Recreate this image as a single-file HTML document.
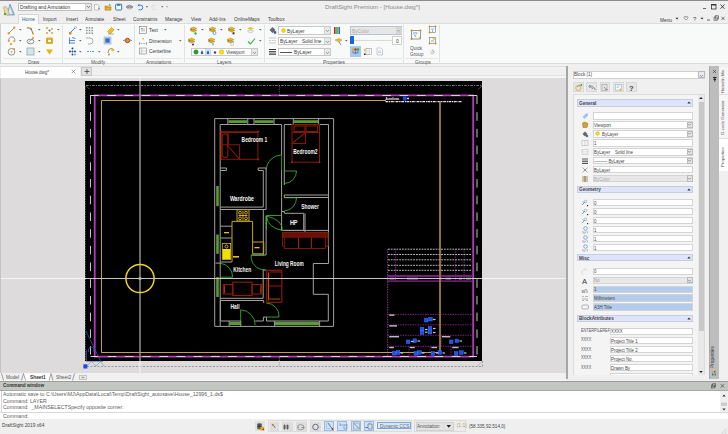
<!DOCTYPE html>
<html><head><meta charset="utf-8">
<style>
*{margin:0;padding:0;box-sizing:border-box}
html,body{width:728px;height:434px;overflow:hidden;background:#efefef;font-family:"Liberation Sans",sans-serif;color:#333;}
.a{position:absolute}
.t{position:absolute;white-space:nowrap;line-height:1;}
.s6{font-size:6px;transform:scaleX(.8);transform-origin:0 0;color:#383838}
</style></head><body>
<!-- ribbon panel -->
<div class="a" style="left:0;top:23px;width:728px;height:41px;background:#f8f9f9;border-top:1px solid #dcdcdc;border-bottom:1px solid #d8d8d8"></div>
<div class="a" style="left:0;top:24px;width:1px;height:40px;background:#d0d0d0"></div>
<!-- doc tab bar -->
<div class="a" style="left:0;top:64px;width:566px;height:14px;background:#f0f0f0"></div>
<div class="a" style="left:0;top:64px;width:566px;height:2.5px;background:#f2f2f2;border-bottom:1px solid #dedede"></div>
<div class="a" style="left:0;top:75.2px;width:566px;height:2.8px;background:#f6f6f6;border-top:1px solid #e2e2e2"></div>
<div class="a" style="left:1px;top:67px;width:79px;height:10.8px;background:#fff"></div>
<div class="t s6" style="left:24.7px;top:68.8px;color:#444;transform:scaleX(.74)">House.dwg*</div>
<svg class="a" style="left:71px;top:69px" width="5" height="5"><path d="M.7 .7L4.3 4.3M4.3 .7L.7 4.3" stroke="#666" stroke-width=".6"/></svg>
<div class="a" style="left:81.2px;top:66.6px;width:10.6px;height:9.1px;background:#e2e2e2;border:1px solid #c8c8c8"></div>
<svg class="a" style="left:82.5px;top:67.7px" width="8" height="7"><path d="M4 1V6M1.5 3.5H6.5" stroke="#444" stroke-width=".8"/></svg>
<!-- canvas -->
<div class="a" style="left:0;top:78px;width:566px;height:295px;background:#dddbdb"></div>
<div class="a" style="left:0;top:78px;width:1px;height:302px;background:#c4c4c4"></div>
<div class="a" style="left:85px;top:81px;width:397px;height:280px;background:#000"></div>
<!-- ===== title bar ===== -->
<div class="a" style="left:0;top:0;width:728px;height:1px;background:#8c8c8c"></div>
<svg class="a" style="left:2px;top:3px" width="14" height="14" viewBox="0 0 14 14">
<path d="M8 1L12.5 12H5Z" fill="#9cc0e0" stroke="#5a88b8" stroke-width=".6"/>
<path d="M8 4L10.5 11H6Z" fill="#dfeefa"/>
<path d="M1.5 4Q4 2.5 5.5 5L7.5 11.5Q5 13 3 11.5Z" fill="#e8d8a8" stroke="#a89060" stroke-width=".5"/>
<circle cx="3" cy="11" r="1.3" fill="#5ab040"/>
</svg>
<div class="a" style="left:18px;top:3px;width:74px;height:8px;background:#fff;border:1px solid #bdbdbd"></div>
<div class="a" style="left:85px;top:4px;width:6px;height:6px;background:#e4e4e4;border-left:1px solid #cfcfcf"></div>
<svg class="a" style="left:86px;top:5px" width="5" height="4"><path d="M1 1L2.5 2.6L4 1" stroke="#555" stroke-width=".7" fill="none"/></svg>
<div class="t s6" style="left:20px;top:4px;color:#333">Drafting and Annotation</div>
<!-- quick access -->
<svg class="a" style="left:90px;top:0" width="82" height="14" viewBox="0 0 82 14">
<path d="M4.5 4.5H7.5L9 6V10H4.5Z" fill="#fbfbfb" stroke="#9a9a9a" stroke-width=".6"/>
<path d="M8 8.5H10M9 7.5V9.5" stroke="#777" stroke-width=".5"/>
<path d="M15 6H17.5L18.3 6.8H21V10.2H15Z" fill="#e8b428" stroke="#9a6a10" stroke-width=".45"/>
<path d="M15.3 7.6H21" stroke="#b88818" stroke-width=".5"/>
<path d="M18.5 5.5L19.8 3.8L21 5.5Z" fill="#2eaa2e"/>
<rect x="25.7" y="4.2" width="6" height="5.8" rx=".6" fill="#fff" stroke="#2a76d0" stroke-width="1"/>
<rect x="27" y="4.2" width="3.4" height="1.6" fill="#2a76d0"/>
<path d="M36 7H43" stroke="#777" stroke-width="1.4"/>
<path d="M37 6.2Q39.5 4 42 6.2" fill="none" stroke="#777" stroke-width=".8"/>
<path d="M37 8.2Q39.5 10 42 8.2" fill="none" stroke="#888" stroke-width=".7"/>
<path d="M49 5.2H50.5A2.3 2.3 0 0 1 50.5 9.8H48.5" stroke="#2a70d0" stroke-width=".9" fill="none"/>
<path d="M47.5 5.2L49.3 4V6.4Z" fill="#2a70d0"/>
<path d="M55.8 6.3H58.2L57 7.6Z" fill="#444"/>
<path d="M65 5.2H64A2.2 2.2 0 0 0 64 9.6H66" stroke="#d8d8d8" stroke-width=".8" fill="none"/>
<path d="M71 6.3H73.4L72.2 7.6Z" fill="#555"/>
<path d="M76 6.3H78.4L77.2 7.6Z" fill="#999"/>
</svg>
<div class="t" style="left:325px;top:4px;font-size:6.1px;color:#8a8a8a">DraftSight Premium - [House.dwg*]</div>
<svg class="a" style="left:700px;top:2px" width="28" height="10" viewBox="0 0 28 10">
<path d="M3 6.5H6" stroke="#444" stroke-width=".8"/>
<rect x="11.5" y="2.5" width="4.5" height="4.5" fill="none" stroke="#333" stroke-width=".8"/>
<path d="M11.5 2.8H16" stroke="#333" stroke-width="1.3"/>
<path d="M20.5 2.5L24.5 6.8M24.5 2.5L20.5 6.8" stroke="#333" stroke-width=".9"/>
</svg>
<!-- ===== ribbon tabs ===== -->
<div class="a" style="left:18px;top:14px;width:21px;height:10px;background:#f8f9f9;border:1px solid #d6d6d6;border-bottom:none"></div>
<div class="t s6" style="left:21.8px;top:16.3px;color:#2a5c98">Home</div>
<div class="t s6" style="left:42.5px;top:16.3px">Import</div>
<div class="t s6" style="left:65.5px;top:16.3px">Insert</div>
<div class="t s6" style="left:85px;top:16.3px">Annotate</div>
<div class="t s6" style="left:113px;top:16.3px">Sheet</div>
<div class="t s6" style="left:133px;top:16.3px">Constraints</div>
<div class="t s6" style="left:165px;top:16.3px">Manage</div>
<div class="t s6" style="left:191px;top:16.3px">View</div>
<div class="t s6" style="left:209px;top:16.3px">Add-Ins</div>
<div class="t s6" style="left:233.8px;top:16.3px">OnlineMaps</div>
<div class="t s6" style="left:268.2px;top:16.3px">Toolbox</div>
<div class="t s6" style="left:659.8px;top:16.5px">Menu</div>
<svg class="a" style="left:674px;top:14px" width="54" height="9" viewBox="0 0 54 9">
<path d="M1.5 3.8H4.5L3 5.4Z" fill="#333"/>
<path d="M10 3.5Q10 2.5 11 2.5Q12 2.5 12 3.3Q12 2.5 13 2.5Q14 2.5 14 3.5Q14 4.5 12 6Q10 4.5 10 3.5Z" fill="none" stroke="#666" stroke-width=".6"/>
<text x="19" y="6.8" font-size="6" font-family="Liberation Sans" fill="#444">?</text>
<path d="M26.5 3.8H29.5L28 5.4Z" fill="#333"/>
<path d="M33 6H36" stroke="#444" stroke-width=".8"/>
<rect x="40" y="3" width="3.2" height="3.2" fill="none" stroke="#444" stroke-width=".6"/>
<rect x="41.2" y="1.8" width="3.2" height="3.2" fill="none" stroke="#444" stroke-width=".6"/>
<path d="M47.5 2.8L50.5 6M50.5 2.8L47.5 6" stroke="#444" stroke-width=".7"/>
</svg>
<div class="a" style="left:62.0px;top:25px;width:1px;height:39px;background:#e2e2e2"></div>
<div class="a" style="left:134.0px;top:25px;width:1px;height:39px;background:#e2e2e2"></div>
<div class="a" style="left:183.5px;top:25px;width:1px;height:39px;background:#e2e2e2"></div>
<div class="a" style="left:264.0px;top:25px;width:1px;height:39px;background:#e2e2e2"></div>
<div class="a" style="left:403.0px;top:25px;width:1px;height:39px;background:#e2e2e2"></div>
<div class="a" style="left:439.0px;top:25px;width:1px;height:39px;background:#e2e2e2"></div>
<div class="a" style="left:3px;top:58px;width:58px;height:1px;background:#e6e6e6"></div>
<div class="a" style="left:64px;top:58px;width:69px;height:1px;background:#e6e6e6"></div>
<div class="a" style="left:136px;top:58px;width:47px;height:1px;background:#e6e6e6"></div>
<div class="a" style="left:186px;top:58px;width:77px;height:1px;background:#e6e6e6"></div>
<div class="a" style="left:266px;top:58px;width:136px;height:1px;background:#e6e6e6"></div>
<div class="a" style="left:405px;top:58px;width:33px;height:1px;background:#e6e6e6"></div>
<div class="t s6" style="left:28.0px;top:59.2px;color:#555">Draw</div>
<div class="t s6" style="left:90.5px;top:59.2px;color:#555">Modify</div>
<div class="t s6" style="left:146.1px;top:59.2px;color:#555">Annotations</div>
<div class="t s6" style="left:216.9px;top:59.2px;color:#555">Layers</div>
<div class="t s6" style="left:323.0px;top:59.2px;color:#555">Properties</div>
<div class="t s6" style="left:414.8px;top:59.2px;color:#555">Groups</div>
<svg class="a" style="left:7.2px;top:25.6px" width="9" height="9" viewBox="0 0 9 9"><path d="M1.5 7.5L7.5 1.5" stroke="#777" stroke-width=".8"/><circle cx="1.8" cy="7.2" r="1.2" fill="#e0a030"/><circle cx="7.2" cy="1.8" r="1.2" fill="#e0a030"/></svg>
<svg class="a" style="left:25.9px;top:25.6px" width="9" height="9" viewBox="0 0 9 9"><path d="M1.5 1.5L5 2.5L6 5L7 8" stroke="#666" stroke-width=".9" fill="none"/><circle cx="1.8" cy="1.8" r="1.1" fill="#e0a030"/><circle cx="5" cy="3" r="1" fill="#888"/><circle cx="7" cy="7.5" r="1.1" fill="#e0a030"/></svg>
<svg class="a" style="left:44.7px;top:25.6px" width="9" height="9" viewBox="0 0 9 9"><circle cx="2" cy="2" r="1" fill="#e0a030"/><circle cx="7" cy="3" r="1" fill="#e0a030"/><circle cx="4.5" cy="4.5" r="1" fill="#666"/><circle cx="2" cy="7" r="1" fill="#e0a030"/><circle cx="7" cy="7" r="1" fill="#e0a030"/></svg>
<svg class="a" style="left:7.2px;top:36.3px" width="9" height="9" viewBox="0 0 9 9"><path d="M2 5A3 3 0 1 1 7.5 5" stroke="#777" stroke-width=".8" fill="none"/><circle cx="1.8" cy="5" r="1.1" fill="#e0a030"/><circle cx="7.3" cy="5" r="1.1" fill="#e0a030"/><circle cx="4" cy="8" r="1.1" fill="#e0a030"/></svg>
<svg class="a" style="left:25.9px;top:36.3px" width="9" height="9" viewBox="0 0 9 9"><ellipse cx="4.5" cy="5.5" rx="3.5" ry="2.3" stroke="#777" stroke-width=".8" fill="none"/><path d="M2.5 6L6.5 3" stroke="#777" stroke-width=".6"/><circle cx="7" cy="2" r="1.1" fill="#e0a030"/></svg>
<svg class="a" style="left:44.7px;top:36.3px" width="9" height="9" viewBox="0 0 9 9"><rect x="1" y="1.5" width="7" height="6.5" rx="1" fill="#e8b020"/><rect x="2.8" y="3.3" width="3.4" height="3" fill="#fff" stroke="#a07010" stroke-width=".4"/></svg>
<svg class="a" style="left:7.2px;top:46.9px" width="9" height="9" viewBox="0 0 9 9"><circle cx="4.5" cy="4.8" r="3.3" stroke="#777" stroke-width=".8" fill="none"/><circle cx="4.5" cy="4.8" r=".9" fill="#e0a030"/><circle cx="7.2" cy="2" r="1" fill="#e0a030"/></svg>
<svg class="a" style="left:25.9px;top:46.9px" width="9" height="9" viewBox="0 0 9 9"><rect x="1" y="1" width="7" height="7" fill="#d8eaf0" stroke="#8a9aa0" stroke-width=".7"/><path d="M2 3H7M2 5H7M2 7H7" stroke="#a8c8d8" stroke-width=".5" stroke-dasharray=".6 .6"/></svg>
<svg class="a" style="left:44.7px;top:46.9px" width="9" height="9" viewBox="0 0 9 9"><path d="M1 2.5H8L4.5 7.5Z" fill="#f0b000"/></svg>
<svg class="a" style="left:19.0px;top:29.3px" width="3" height="2"><path d="M0 0H2.6L1.3 1.5Z" fill="#666"/></svg>
<svg class="a" style="left:37.7px;top:29.3px" width="3" height="2"><path d="M0 0H2.6L1.3 1.5Z" fill="#666"/></svg>
<svg class="a" style="left:57.0px;top:29.3px" width="3" height="2"><path d="M0 0H2.6L1.3 1.5Z" fill="#666"/></svg>
<svg class="a" style="left:19.0px;top:40.0px" width="3" height="2"><path d="M0 0H2.6L1.3 1.5Z" fill="#666"/></svg>
<svg class="a" style="left:37.7px;top:40.0px" width="3" height="2"><path d="M0 0H2.6L1.3 1.5Z" fill="#666"/></svg>
<svg class="a" style="left:19.0px;top:50.6px" width="3" height="2"><path d="M0 0H2.6L1.3 1.5Z" fill="#666"/></svg>
<svg class="a" style="left:37.7px;top:50.6px" width="3" height="2"><path d="M0 0H2.6L1.3 1.5Z" fill="#666"/></svg>
<svg class="a" style="left:67.5px;top:25.6px" width="9" height="9" viewBox="0 0 9 9"><rect x="1" y="6" width="2.5" height="2.5" fill="#d08a30"/><path d="M3 6L7 2" stroke="#2a70d0" stroke-width=".9"/><circle cx="7.5" cy="1.5" r="1" fill="none" stroke="#888" stroke-width=".5"/></svg>
<svg class="a" style="left:84.5px;top:25.6px" width="9" height="9" viewBox="0 0 9 9"><g fill="#999"><rect x="1" y="1" width="1.6" height="1.6"/><rect x="3.7" y="1" width="1.6" height="1.6"/><rect x="6.4" y="1" width="1.6" height="1.6"/><rect x="1" y="3.7" width="1.6" height="1.6"/><rect x="3.7" y="3.7" width="1.6" height="1.6"/><rect x="6.4" y="3.7" width="1.6" height="1.6"/><rect x="1" y="6.4" width="1.6" height="1.6"/><rect x="3.7" y="6.4" width="1.6" height="1.6"/><rect x="6.4" y="6.4" width="1.6" height="1.6"/></g></svg>
<svg class="a" style="left:105.5px;top:25.6px" width="9" height="9" viewBox="0 0 9 9"><path d="M1.5 5.5L5.5 1.5L8 4L4 8Z" fill="#f0c020" stroke="#a07010" stroke-width=".4"/><path d="M2 8H8" stroke="#666" stroke-width=".5"/></svg>
<svg class="a" style="left:67.5px;top:36.3px" width="9" height="9" viewBox="0 0 9 9"><path d="M1.5 1.5V8M1.5 4.5H7M1.5 7H7M4 1.5L7.5 2.5" stroke="#2a70d0" stroke-width=".8" fill="none"/></svg>
<svg class="a" style="left:84.5px;top:36.3px" width="9" height="9" viewBox="0 0 9 9"><path d="M1 2H5A3 3 0 0 1 5 8H3" stroke="#999" stroke-width=".8" fill="none"/></svg>
<svg class="a" style="left:103.3px;top:36.3px" width="9" height="9" viewBox="0 0 9 9"><rect x="1" y="1" width="7" height="7" fill="#ccd8e8" stroke="#999" stroke-width=".5"/><rect x="2.3" y="2.3" width="4.4" height="4.4" fill="#2a6ee0"/></svg>
<svg class="a" style="left:122.5px;top:36.3px" width="9" height="9" viewBox="0 0 9 9"><circle cx="4.5" cy="4.5" r="2.2" fill="#e0a020" stroke="#a02010" stroke-width=".8"/><path d="M0 4.5L1.5 3.5V5.5ZM9 4.5L7.5 3.5V5.5Z" fill="#2a70d0"/></svg>
<svg class="a" style="left:67.5px;top:46.9px" width="9" height="9" viewBox="0 0 9 9"><g fill="#1a4aa0"><circle cx="4.5" cy="1.5" r="1"/><circle cx="2" cy="4.5" r="1"/><circle cx="4.5" cy="4.5" r="1"/><circle cx="7" cy="4.5" r="1"/><circle cx="4.5" cy="7.5" r="1"/><circle cx="7" cy="7.5" r="1" fill="#8ac"/></g></svg>
<svg class="a" style="left:86.3px;top:46.9px" width="9" height="9" viewBox="0 0 9 9"><path d="M1 4.5H3M4 4.5H5M6 4.5H8" stroke="#4a8ae0" stroke-width=".9"/></svg>
<svg class="a" style="left:105.5px;top:46.9px" width="9" height="9" viewBox="0 0 9 9"><path d="M2 6Q2 2 5 1.5Q8 1.5 8 4" stroke="#a08050" stroke-width=".9" fill="none"/><circle cx="6.5" cy="3" r="1.3" fill="#f0c020"/><circle cx="3" cy="7.5" r="1" fill="#d08a30"/></svg>
<svg class="a" style="left:79.0px;top:29.3px" width="3" height="2"><path d="M0 0H2.6L1.3 1.5Z" fill="#666"/></svg>
<svg class="a" style="left:116.9px;top:29.3px" width="3" height="2"><path d="M0 0H2.6L1.3 1.5Z" fill="#666"/></svg>
<svg class="a" style="left:79.0px;top:40.0px" width="3" height="2"><path d="M0 0H2.6L1.3 1.5Z" fill="#666"/></svg>
<svg class="a" style="left:79.0px;top:50.6px" width="3" height="2"><path d="M0 0H2.6L1.3 1.5Z" fill="#666"/></svg>
<svg class="a" style="left:97.7px;top:50.6px" width="3" height="2"><path d="M0 0H2.6L1.3 1.5Z" fill="#666"/></svg>
<svg class="a" style="left:116.9px;top:50.6px" width="3" height="2"><path d="M0 0H2.6L1.3 1.5Z" fill="#666"/></svg>
<svg class="a" style="left:138.7px;top:26.0px" width="8" height="8" viewBox="0 0 8 8"><rect x=".5" y=".5" width="7" height="7" fill="#fafafa" stroke="#777" stroke-width=".6"/><path d="M2 2.5H4M3 2.5V5.5M5 2.5V5.5" stroke="#555" stroke-width=".5"/></svg>
<svg class="a" style="left:138.7px;top:36.5px" width="8" height="8" viewBox="0 0 8 8"><path d="M3 1.5L4.5 0.5L5 3Z" fill="#f0b000"/><path d="M.5 6.5H7.5" stroke="#4a8ad0" stroke-width=".8" stroke-dasharray=".8 .8"/><path d="M.5 5V8M7.5 5V8" stroke="#666" stroke-width=".5"/></svg>
<svg class="a" style="left:138.7px;top:47.0px" width="8" height="8" viewBox="0 0 8 8"><rect x=".5" y="1" width="7" height="6" fill="#f4f4f4" stroke="#888" stroke-width=".6"/><path d="M2.5 1V7M.5 4H7.5" stroke="#aaa" stroke-width=".4"/></svg>
<div class="t s6" style="left:149px;top:27.2px;">Text</div>
<svg class="a" style="left:164.2px;top:29.2px" width="3" height="2"><path d="M0 0H2.6L1.3 1.5Z" fill="#666"/></svg>
<div class="t s6" style="left:149px;top:37.8px;">Dimension</div>
<svg class="a" style="left:178.5px;top:40.0px" width="3" height="2"><path d="M0 0H2.6L1.3 1.5Z" fill="#666"/></svg>
<div class="t s6" style="left:149px;top:48.4px;">Centerline</div>
<svg class="a" style="left:188.7px;top:25.6px" width="9" height="9" viewBox="0 0 9 9"><path d="M1 2.5L4.5 1L8 2.5L4.5 4Z" fill="#f0c020" stroke="#8a6a10" stroke-width=".35"/><path d="M1 4.5L4.5 3L8 4.5L4.5 6Z" fill="#e0a820" stroke="#8a6a10" stroke-width=".35"/><path d="M1.2 3.2L3 3.6" stroke="#333" stroke-width=".5"/><circle cx="6.5" cy="7.5" r="1.2" fill="#22c040"/></svg>
<svg class="a" style="left:208.3px;top:25.6px" width="9" height="9" viewBox="0 0 9 9"><path d="M1 2.5L4.5 1L8 2.5L4.5 4Z" fill="#f0c020" stroke="#8a6a10" stroke-width=".35"/><path d="M1 4.5L4.5 3L8 4.5L4.5 6Z" fill="#e0a820" stroke="#8a6a10" stroke-width=".35"/><path d="M1.2 3.2L3 3.6" stroke="#333" stroke-width=".5"/><circle cx="6.5" cy="7" r="1.5" fill="none" stroke="#3a8ae0" stroke-width=".7"/></svg>
<svg class="a" style="left:227.4px;top:25.6px" width="9" height="9" viewBox="0 0 9 9"><path d="M1 2.5L4.5 1L8 2.5L4.5 4Z" fill="#f0c020" stroke="#8a6a10" stroke-width=".35"/><path d="M1 4.5L4.5 3L8 4.5L4.5 6Z" fill="#e0a820" stroke="#8a6a10" stroke-width=".35"/><path d="M1.2 3.2L3 3.6" stroke="#333" stroke-width=".5"/><rect x="5.5" y="6.3" width="2" height="2" fill="#333"/></svg>
<svg class="a" style="left:246.4px;top:25.6px" width="9" height="9" viewBox="0 0 9 9"><path d="M1 2.5L4.5 1L8 2.5L4.5 4Z" fill="#f0c020"/><path d="M1.5 5Q4.5 3.5 7.5 5Q4.5 8.5 1.5 5Z" fill="#eef4fa" stroke="#8ab0d0" stroke-width=".5"/></svg>
<svg class="a" style="left:187.0px;top:36.5px" width="9" height="9" viewBox="0 0 9 9"><path d="M1 2.5L4.5 1L8 2.5L4.5 4Z" fill="#f0c020" stroke="#8a6a10" stroke-width=".35"/><path d="M1 4.5L4.5 3L8 4.5L4.5 6Z" fill="#e0a820" stroke="#8a6a10" stroke-width=".35"/><path d="M1.2 3.2L3 3.6" stroke="#333" stroke-width=".5"/><circle cx="6" cy="7.5" r="1.1" fill="#444"/></svg>
<svg class="a" style="left:206.5px;top:36.5px" width="9" height="9" viewBox="0 0 9 9"><path d="M1 2.5L4.5 1L8 2.5L4.5 4Z" fill="#f0c020" stroke="#8a6a10" stroke-width=".35"/><path d="M1 4.5L4.5 3L8 4.5L4.5 6Z" fill="#e0a820" stroke="#8a6a10" stroke-width=".35"/><path d="M1.2 3.2L3 3.6" stroke="#333" stroke-width=".5"/><path d="M6 6V8.5" stroke="#3a7ad0" stroke-width=".8"/></svg>
<svg class="a" style="left:226.0px;top:36.5px" width="9" height="9" viewBox="0 0 9 9"><path d="M1 2.5L4.5 1L8 2.5L4.5 4Z" fill="#f0c020" stroke="#8a6a10" stroke-width=".35"/><path d="M1 4.5L4.5 3L8 4.5L4.5 6Z" fill="#e0a820" stroke="#8a6a10" stroke-width=".35"/><path d="M1.2 3.2L3 3.6" stroke="#333" stroke-width=".5"/><rect x="5" y="5.5" width="2.5" height="3" fill="#f4f4f4" stroke="#999" stroke-width=".4"/></svg>
<svg class="a" style="left:247.0px;top:36.5px" width="9" height="9" viewBox="0 0 9 9"><path d="M1 4.5L3.5 7L8 1.5" stroke="#30b040" stroke-width="1.1" fill="none"/></svg>
<svg class="a" style="left:200.6px;top:29.3px" width="3" height="2"><path d="M0 0H2.6L1.3 1.5Z" fill="#666"/></svg>
<svg class="a" style="left:220.2px;top:29.3px" width="3" height="2"><path d="M0 0H2.6L1.3 1.5Z" fill="#666"/></svg>
<svg class="a" style="left:239.2px;top:29.3px" width="3" height="2"><path d="M0 0H2.6L1.3 1.5Z" fill="#666"/></svg>
<svg class="a" style="left:258.7px;top:29.3px" width="3" height="2"><path d="M0 0H2.6L1.3 1.5Z" fill="#666"/></svg>
<svg class="a" style="left:258.7px;top:40.2px" width="3" height="2"><path d="M0 0H2.6L1.3 1.5Z" fill="#666"/></svg>
<div class="a" style="left:191px;top:47.5px;width:67px;height:8.5px;background:#fff;border:1px solid #c8c8c8"></div>
<div class="a" style="left:251px;top:48.5px;width:6px;height:6.5px;background:#e8e8e8;border-left:1px solid #d0d0d0"></div>
<svg class="a" style="left:252px;top:50.5px" width="5" height="4"><path d="M1 1L2.5 2.6L4 1" stroke="#666" stroke-width=".6" fill="none"/></svg>
<svg class="a" style="left:192px;top:48px" width="40" height="8" viewBox="0 0 40 8"><circle cx="4" cy="4" r="2.2" fill="#2aa030" stroke="#1a6a1a" stroke-width=".4"/><path d="M10 2L11.2 4.5A1.3 1.3 0 1 1 8.8 4.5Z" fill="#2a60c0"/><rect x="13.5" y="0.6" width="5" height="6.8" fill="#dde8f8" stroke="#8ab0e0" stroke-width=".4"/><path d="M16 2L17.2 4.5A1.3 1.3 0 1 1 14.8 4.5Z" fill="#2a60c0"/><circle cx="23" cy="4.5" r="1.2" fill="#444"/><path d="M21 2.5L22 3.5" stroke="#666" stroke-width=".4"/><circle cx="29.5" cy="4" r="2.3" fill="#ffe000" stroke="#c8a000" stroke-width=".4"/></svg>
<div class="t s6" style="left:226px;top:49.2px;color:#444">Viewport</div>
<svg class="a" style="left:267.9px;top:25.8px" width="9" height="9" viewBox="0 0 9 9"><path d="M1.5 4L4.5 1L7.5 4L4.5 7Z" fill="#666"/><circle cx="7" cy="6.5" r="1.4" fill="#2a60c0"/></svg>
<svg class="a" style="left:267.5px;top:36.3px" width="9" height="9" viewBox="0 0 9 9"><path d="M1 2H8M1 4.5H3M4 4.5H5.5M6.5 4.5H8M1 7H8" stroke="#999" stroke-width=".5"/></svg>
<svg class="a" style="left:267.5px;top:47.0px" width="9" height="9" viewBox="0 0 9 9"><path d="M1 2.5H8" stroke="#333" stroke-width="1"/><path d="M1 4.8H8" stroke="#333" stroke-width="1.2"/><path d="M1 7.2H8" stroke="#555" stroke-width="1.4"/></svg>
<div class="a" style="left:278.2px;top:26.4px;width:52.5px;height:8.2px;background:#fff;border:1px solid #c8c8c8"></div>
<div class="a" style="left:323.7px;top:27.4px;width:6px;height:6.2px;background:#e8e8e8;border-left:1px solid #d0d0d0"></div>
<svg class="a" style="left:324.5px;top:29.4px" width="5" height="4"><path d="M1 1L2.5 2.6L4 1" stroke="#666" stroke-width=".6" fill="none"/></svg>
<div class="a" style="left:278.2px;top:36.8px;width:52.5px;height:8.2px;background:#fff;border:1px solid #c8c8c8"></div>
<div class="a" style="left:323.7px;top:37.8px;width:6px;height:6.2px;background:#e8e8e8;border-left:1px solid #d0d0d0"></div>
<svg class="a" style="left:324.5px;top:39.8px" width="5" height="4"><path d="M1 1L2.5 2.6L4 1" stroke="#666" stroke-width=".6" fill="none"/></svg>
<div class="a" style="left:278.2px;top:47.6px;width:52.5px;height:8.2px;background:#fff;border:1px solid #c8c8c8"></div>
<div class="a" style="left:323.7px;top:48.6px;width:6px;height:6.2px;background:#e8e8e8;border-left:1px solid #d0d0d0"></div>
<svg class="a" style="left:324.5px;top:50.6px" width="5" height="4"><path d="M1 1L2.5 2.6L4 1" stroke="#666" stroke-width=".6" fill="none"/></svg>
<svg class="a" style="left:280.5px;top:28.2px" width="5" height="5"><circle cx="2.5" cy="2.5" r="1.9" fill="#ffe000" stroke="#b89000" stroke-width=".4"/></svg>
<div class="t s6" style="left:287.2px;top:27.8px;">ByLayer</div>
<div class="t s6" style="left:279.5px;top:37.8px;">ByLayer</div>
<div class="t s6" style="left:301.8px;top:37.8px;">Solid line</div>
<div class="a" style="left:280px;top:51.5px;width:12px;height:.8px;background:#555"></div>
<div class="t s6" style="left:293.7px;top:49.4px;">ByLayer</div>
<svg class="a" style="left:332.5px;top:25.8px" width="8" height="9" viewBox="0 0 8 9"><rect x="1" y="1" width="1.6" height="7" fill="#c02020"/><rect x="3.2" y="1" width="1.6" height="7" fill="#30b030"/><rect x="5.4" y="1" width="1.6" height="7" fill="#3070d0"/></svg>
<svg class="a" style="left:334.2px;top:36.5px" width="9" height="9" viewBox="0 0 9 9"><path d="M1 3L5 1.5L8 3L5 5Z" fill="#f0c020" stroke="#8a6a10" stroke-width=".35"/><path d="M5 5L7 8" stroke="#555" stroke-width=".7"/></svg>
<svg class="a" style="left:345.4px;top:40.2px" width="3" height="2"><path d="M0 0H2.6L1.3 1.5Z" fill="#666"/></svg>
<div class="a" style="left:350.2px;top:26.4px;width:52px;height:8.2px;background:#e6e6e6;border:1px solid #b8c4d4"></div>
<div class="a" style="left:395.5px;top:27.4px;width:6px;height:6.2px;background:#d6d6d6"></div>
<svg class="a" style="left:396px;top:29.4px" width="5" height="4"><path d="M1 1L2.5 2.6L4 1" stroke="#999" stroke-width=".6" fill="none"/></svg>
<div class="t s6" style="left:351.5px;top:28.2px;color:#aaa">ByColor</div>
<div class="a" style="left:353px;top:40px;width:39px;height:1px;background:#d8d8d8"></div>
<div class="a" style="left:350.2px;top:36.4px;width:3.5px;height:8px;background:#1a66d8;border-radius:.5px"></div>
<div class="a" style="left:392.3px;top:36.4px;width:10px;height:8.6px;background:#fff;border:1px solid #d0d0d0"></div>
<div class="t s6" style="left:396px;top:38.3px;">0</div>
<div class="a" style="left:350.2px;top:46px;width:11px;height:10.6px;background:#a8c8ec"></div>
<svg class="a" style="left:351.2px;top:46.8px" width="9" height="9" viewBox="0 0 9 9"><circle cx="2" cy="2.5" r="1.2" fill="#e0b000"/><circle cx="4.5" cy="2.5" r="1.2" fill="#c03020"/><circle cx="7" cy="2.5" r="1.2" fill="#30a030"/><path d="M2 4V6H7V4M4.5 4V7" stroke="#2a60b0" stroke-width=".6" fill="none"/></svg>
<svg class="a" style="left:363.0px;top:46.8px" width="9" height="9" viewBox="0 0 9 9"><rect x="3" y="1.5" width="5.5" height="6" fill="#fff" stroke="#888" stroke-width=".5"/><path d="M5 1.5V7.5M6.5 1.5V7.5" stroke="#aaa" stroke-width=".4"/><path d="M1 1.5L3 3L1 4.5Z" fill="#f0c000"/><rect x="1" y="6.5" width="1.5" height="1.5" fill="#222"/></svg>
<svg class="a" style="left:374.5px;top:46.8px" width="9" height="9" viewBox="0 0 9 9"><path d="M2 1H6L7.5 2.5V8H2Z" fill="#fff" stroke="#999" stroke-width=".5"/><path d="M3 4H6M3 5.5H6" stroke="#6a9ad0" stroke-width=".5"/></svg>
<svg class="a" style="left:410.0px;top:28.5px" width="12" height="12" viewBox="0 0 12 12"><rect x="1.5" y="1.5" width="9" height="8.5" fill="none" stroke="#555" stroke-width=".6"/><circle cx="1.5" cy="1.5" r="1" fill="#d08a30"/><circle cx="10.5" cy="1.5" r="1" fill="#d08a30"/><circle cx="1.5" cy="10" r="1" fill="#d08a30"/><path d="M3.5 3.5H7V5H3.5Z" fill="none" stroke="#6a9ad0" stroke-width=".5"/><path d="M4.5 6L6 8" stroke="#3a8ae0" stroke-width=".8"/><path d="M9 7.5Q10.5 8 10 10Q8.5 9.5 9 7.5Z" fill="#f0b000"/></svg>
<div class="t s6" style="left:410.3px;top:45px;color:#555">Quick</div>
<div class="t s6" style="left:410px;top:51.2px;color:#555">Group</div>
<svg class="a" style="left:428.0px;top:25.1px" width="9" height="9" viewBox="0 0 9 9"><rect x="1.5" y="1.5" width="6" height="6" fill="none" stroke="#555" stroke-width=".5"/><circle cx="1.5" cy="1.5" r=".9" fill="#d08a30"/><circle cx="7.5" cy="1.5" r=".9" fill="#d08a30"/><circle cx="1.5" cy="7.5" r=".9" fill="#d08a30"/><path d="M3 4H6M4.5 5V7" stroke="#3a8ae0" stroke-width=".6"/></svg>
<svg class="a" style="left:428.0px;top:35.7px" width="9" height="9" viewBox="0 0 9 9"><rect x="1.5" y="1.5" width="6" height="6" fill="none" stroke="#555" stroke-width=".5"/><circle cx="1.5" cy="7.5" r=".9" fill="#d08a30"/><circle cx="7.5" cy="7.5" r=".9" fill="#d08a30"/><path d="M4 2.5L8 2L6 4Z" fill="#f0c000"/><path d="M3 5H6" stroke="#3a8ae0" stroke-width=".7"/></svg>
<svg class="a" style="left:428.0px;top:46.9px" width="9" height="9" viewBox="0 0 9 9"><circle cx="4.5" cy="5" r="2.5" fill="#eef" stroke="#bbb" stroke-width=".4" stroke-dasharray=".6 .6"/><path d="M3 6H6" stroke="#f0b000" stroke-width=".8"/><path d="M4 3L6 5" stroke="#3a8ae0" stroke-width=".6"/></svg>
<svg class="a" style="left:0;top:0" width="728" height="434" viewBox="0 0 728 434">
<g fill="none">
<!-- paper dotted boundary -->
<path d="M85.5 86V361" stroke="#4a4a4a" stroke-width="1" stroke-dasharray="1.5 1"/>
<path d="M87 366.5H482.5V361" stroke="#9a9a9a" stroke-width="1" stroke-dasharray="2 1.5"/>
<path d="M482 361.5L477.5 366" stroke="#a0a0a0" stroke-width=".6"/>
<path d="M86 85.5H482" stroke="#7a7a7a" stroke-width="1" stroke-dasharray="2.5 1.2 1.2 1.2"/>
<path d="M86 86L90 89.5M482 86L478 89.5" stroke="#666" stroke-width="0.7"/>
<!-- magenta frame -->
<path d="M94.7 95.3H473.2V356.7H94.7Z" stroke="#b43cbc" stroke-width="1.8"/>
<!-- grey dashed frame -->
<path d="M90 95.5H477M90.5 356.5H477" stroke="#d4d4d4" stroke-width="1" stroke-dasharray="8.7 8.5"/>
<path d="M90.5 95.5V356.5M477 95.5V356.5" stroke="#c4c4c4" stroke-width="1" stroke-dasharray="8.6 8.1"/>
<path d="M279.3 86V95" stroke="#6a6a6a" stroke-width=".8" stroke-dasharray="1.5 1"/>
<path d="M279.3 357V366" stroke="#9a9a9a" stroke-width=".8" stroke-dasharray="1.5 1"/>
<!-- orange frame -->
<path d="M101.5 352.5V100.5H386M440 101V352.5H101.5" stroke="#c89c58" stroke-width="1"/>
<!-- title top text -->
<text x="385.6" y="100" font-family="Liberation Sans" font-weight="bold" font-size="3.6" fill="#ffffff" textLength="13.4" lengthAdjust="spacingAndGlyphs">Autolinea</text>
<rect x="403" y="96.5" width="3.6" height="4" fill="#1a4cff"/>
<path d="M407 98.5H409" stroke="#ddd" stroke-width="1.5"/>
<path d="M385.5 101.6H461.5" stroke="#e4e4e4" stroke-width="1.1" stroke-dasharray="2.5 .6 1.5 .6 3 .8 1 .5"/>

<!-- ===== floor plan walls ===== -->
<g stroke="#a4a0a0" stroke-width="1">
<!-- outer -->
<path d="M214.7 118.6H333.6V326.4H214.7Z"/>
<!-- top inner -->
<path d="M220.2 326V124.5H281.6V155M284.3 185V124.5H328.5V263.5H313.3V294.3H328.3V321H266.5V317.1H263.4V321H255.2"/>
<!-- window piers (top) -->
<path d="M227.8 118.6V124.5M247.8 118.6V124.5M254 118.6V124.5M274 118.6V124.5M293.3 118.6V124.5M318.6 118.6V124.5"/>
<!-- bedroom1 / wardrobe wall -->
<path d="M220.2 168H226.4V170.5H220.2M258.2 168H266.1V209.5M258.2 168V170.5H263.3V207.1H220.2M220.2 209.5H266.1"/>
<!-- bedroom1 right wall lower -->
<path d="M281.6 170V197.5M284.3 197.5V195H328.5M284.3 197.5H328.5"/>
<!-- corridor left wall -->
<path d="M263.3 209.5V255M266.1 216V255H251.3"/>
<!-- HP box -->
<path d="M281.6 212V230.4H303.7V213.3H284.3V211.5H281.6M305 213.3V230.4M284.3 230.4H328M305 230.4V232"/>
<!-- shower piers -->
<path d="M281.6 197.5V212"/>
<!-- kitchen -->
<path d="M215.5 263.1H220.4M220.4 226.2H232M220.4 238H232M220.4 262H232"/>
<!-- dining -->
<path d="M220.4 298.3H263.2V270M220.4 300.5H263.7V303M263.2 270H266"/>
<!-- hall -->
<path d="M220.4 300.5V321H240.7"/>
<!-- bottom window piers -->
<path d="M229.2 321V326.4M240.7 321V326.4M274.6 321V326.4M319.6 321V326.4"/>
</g>
<!-- windows green -->
<g fill="#5a9a30">
<rect x="228.5" y="120.2" width="19" height="2.8"/>
<rect x="254.5" y="120.2" width="19" height="2.8"/>
<rect x="293.8" y="120.2" width="24.5" height="2.8"/>
<rect x="216.2" y="186" width="2.6" height="20.2"/>
<rect x="216.2" y="234.5" width="2.6" height="19.3"/>
<rect x="216.2" y="277" width="2.6" height="20"/>
<rect x="229.6" y="322" width="10.4" height="3"/>
<rect x="275" y="322" width="44.3" height="3.2"/>
</g>
<!-- doors green -->
<g stroke="#40c030" stroke-width="0.8">
<path d="M281.6 155V170M266.1 170A15.5 15.5 0 0 1 281.6 155"/>
<path d="M284.3 171H296.5A12.5 12.5 0 0 1 284.3 183.5"/>
<path d="M284.3 197.8H296.5A13 13 0 0 1 284.3 211"/>
<path d="M266.4 215.5V230M266.4 215.5H281M266.4 216Q283 220 282.3 230.4Q268 228 266.4 216"/>
<path d="M251.2 255.5A13.3 13.3 0 0 0 264.5 269.8M251.2 255.3H264"/>
<path d="M220.4 263.3A13.6 13.6 0 0 1 232.6 277M220.4 277.2H232.6"/>
<path d="M240.7 325V309.8A15.2 15.2 0 0 1 255.2 325"/>
<path d="M266.4 303A13 13 0 0 1 279 317H266.4"/>
</g>
<!-- beds -->
<g stroke="#821808" stroke-width="1.1">
<rect x="220.8" y="132" width="37.1" height="27.3"/>
<rect x="222.3" y="133.9" width="5.5" height="23.6" rx="2.6"/>
<path d="M222.3 144.8H239.6V159.3M227 144.8L239.6 159.3M228.3 132V144.8"/>
<path d="M220.8 132.3H257.9" stroke-width="1.6"/>
<rect x="292" y="124.6" width="27.5" height="37.6"/>
<rect x="294" y="126" width="11" height="5.5"/>
<rect x="306" y="126" width="11.5" height="5.5"/>
<path d="M305.5 132.5V143.5H292M305.5 132.5L292 143.5M292 132.5H319"/>
</g>
<path d="M220.8 132V159.3" stroke="#c04a10" stroke-width=".9"/>
<g fill="#c02010"><circle cx="220.8" cy="131.4" r=".9"/><circle cx="258.2" cy="131.4" r=".9"/><circle cx="258.2" cy="159.5" r=".9"/><circle cx="220.8" cy="159.5" r=".9"/><circle cx="319.5" cy="162.2" r=".9"/><circle cx="292" cy="162.2" r=".9"/></g>
<!-- sofa top -->
<rect x="282.5" y="232.5" width="45.6" height="4.6" fill="#6a1006" stroke="#801808" stroke-width="1"/>
<g stroke="#801808" stroke-width="1">
<path d="M282.5 237V246.3H284.7V248.5H325.4V246.3H328.1V237M284.7 237V246.3M325.4 237V246.3"/>
</g>
<path d="M298.5 237.5V248M311.4 237.5V248" stroke="#c02018" stroke-width=".9"/>
<!-- sofa vertical -->
<g stroke="#961a0a" stroke-width="1.1">
<rect x="266.8" y="270.3" width="15" height="32"/>
<path d="M268.5 272V301M268.5 286H281.8M270 272H281.8"/>
</g>
<path d="M268.5 273V299H280" stroke="#d06010" stroke-width=".8"/>
<!-- dining table -->
<g stroke="#961a0a" stroke-width="1.1">
<rect x="232.8" y="282.2" width="19.3" height="13.4"/>
<rect x="223.3" y="284.5" width="9.5" height="9.5"/>
<rect x="252.1" y="284.5" width="9.8" height="9.5"/>
</g>
<path d="M224.6 285.5V293M260.8 285.5V293" stroke="#e05010" stroke-width=".8"/>
<!-- kitchen yellow -->
<g stroke="#c8a020" stroke-width="1">
<path d="M232 262V221.4H252.6V253.8H263.7V242H252.6"/>
<rect x="237" y="209.8" width="12" height="11.2"/>
</g>
<g stroke="#e8c020" stroke-width=".9">
<circle cx="240" cy="212.7" r="1.4"/><circle cx="246" cy="212.7" r="1.4"/><circle cx="240" cy="218.3" r="1.4"/><circle cx="246" cy="218.3" r="1.4"/>
<path d="M243 211V220M238.5 215.5H247.5"/>
</g>
<rect x="222.3" y="249" width="8.3" height="10.4" fill="#f0e000"/>
<rect x="222.3" y="243.5" width="8.3" height="15.9" stroke="#d8b020" stroke-width=".8"/>
<circle cx="226.5" cy="246.5" r="1.5" stroke="#f0e000" stroke-width=".8"/>
<g fill="#e0c030"><rect x="224" y="232" width="5" height="1.3"/><rect x="233" y="256" width="6" height="1.6"/><rect x="254.5" y="247" width="5" height="1.3"/></g>
<!-- labels -->
<g fill="#f4f4f4" font-family="Liberation Sans" font-weight="bold" font-size="6.3">
<text x="241.6" y="142" textLength="25.6" lengthAdjust="spacingAndGlyphs">Bedroom 1</text>
<text x="293.3" y="153.8" textLength="24.2" lengthAdjust="spacingAndGlyphs">Bedroom2</text>
<text x="229.9" y="201" textLength="24.1" lengthAdjust="spacingAndGlyphs">Wardrobe</text>
<text x="301.2" y="208.8" textLength="17.7" lengthAdjust="spacingAndGlyphs">Shower</text>
<text x="289.9" y="225.2" textLength="7.6" lengthAdjust="spacingAndGlyphs">HP</text>
<text x="274.7" y="265.9" textLength="29" lengthAdjust="spacingAndGlyphs">Living Room</text>
<text x="233.3" y="271.8" textLength="18" lengthAdjust="spacingAndGlyphs">Kitchen</text>
<text x="230.5" y="309.2" textLength="9" lengthAdjust="spacingAndGlyphs">Hall</text>
</g>

<!-- ===== title block ===== -->
<g stroke="#a020a8" stroke-width=".8" stroke-dasharray="1.5 1">
<path d="M395.5 249V281M441.2 249V281M455.7 249V281M464.1 249V281"/>
<path d="M387.6 314.4H472M387.6 324.8H472M387.6 335.3H472M387.6 346.3H472"/>
<path d="M409 346.3V356M430 346.3V356M451 346.3V356M441.3 335.3V346.3"/>
</g>
<path d="M387.7 249V356" stroke="#b040c0" stroke-width=".8" stroke-dasharray="1.5 1"/>
<g stroke="#d0d0d0" stroke-width=".9" stroke-dasharray="1.8 1">
<path d="M388 249.2H472M388 254.5H472M388 259.8H472M388 265.3H472M388 270.3H472"/>
</g>
<path d="M387.6 276H472.5" stroke="#7c1886" stroke-width="2.2"/>
<path d="M387.6 281.1H472.5" stroke="#b030b8" stroke-width="1"/>
<g fill="#e0e0e0">
<rect x="389.5" y="277.8" width="5" height="1.5"/><rect x="407" y="277.8" width="11" height="1.5"/><rect x="445.5" y="277.8" width="5.5" height="1.5"/><rect x="458.7" y="277.8" width="3.3" height="1.5"/><rect x="466" y="277.8" width="5" height="1.5"/>
</g>
<g fill="#bdbdbd">
<rect x="389.2" y="314.4" width="5.3" height="1.4"/><rect x="389.2" y="325.2" width="7.8" height="1.4"/><rect x="389.2" y="336" width="9.8" height="1.4"/><rect x="389.2" y="346.8" width="4.7" height="1.4"/><rect x="409.7" y="346.8" width="5.1" height="1.4"/><rect x="431.3" y="346.8" width="5.7" height="1.4"/><rect x="452.2" y="346.8" width="6.3" height="1.4"/><rect x="442" y="336" width="8.3" height="1.4"/>
</g>
<path d="M440 101V352.5" stroke="#a48838" stroke-width="1.3"/>
<path d="M101.5 352.5H440" stroke="#c89c58" stroke-width="1"/>
<!-- blue grips -->
<g fill="#1a50f8" stroke="#4a80ff" stroke-width=".4">
<rect x="424.4" y="318.4" width="3.6" height="3.6"/><rect x="428.8" y="317.4" width="3.6" height="3.6"/><rect x="420.3" y="327.3" width="3.6" height="3.6"/><rect x="420.3" y="330.8" width="3.6" height="3.6"/><rect x="428.2" y="326.4" width="3.6" height="3.6"/><rect x="428.2" y="330.4" width="3.6" height="3.6"/><rect x="406.4" y="340.0" width="3.6" height="3.6"/><rect x="413.0" y="338.9" width="3.6" height="3.6"/><rect x="449.4" y="340.0" width="3.6" height="3.6"/><rect x="455.1" y="339.1" width="3.6" height="3.6"/><rect x="392.3" y="351.4" width="3.6" height="3.6"/><rect x="396.2" y="350.7" width="3.6" height="3.6"/><rect x="414.0" y="351.6" width="3.6" height="3.6"/><rect x="417.7" y="350.7" width="3.6" height="3.6"/><rect x="431.1" y="351.6" width="3.6" height="3.6"/><rect x="438.0" y="350.7" width="3.6" height="3.6"/><rect x="454.4" y="351.6" width="3.6" height="3.6"/><rect x="459.6" y="350.7" width="3.6" height="3.6"/>
</g>
<g fill="#c8c8c8">
<rect x="433" y="318.9" width="2.5" height="1.2"/><rect x="425" y="328.9" width="2.5" height="1.2"/><rect x="425" y="331.59999999999997" width="2.5" height="1.2"/><rect x="433" y="327.9" width="2.5" height="1.2"/><rect x="433" y="331.9" width="2.5" height="1.2"/><rect x="411" y="340.9" width="2.5" height="1.2"/><rect x="417.5" y="340.4" width="2.5" height="1.2"/><rect x="459.5" y="340.4" width="2.5" height="1.2"/><rect x="400.5" y="352.4" width="2.5" height="1.2"/><rect x="422" y="352.4" width="2.5" height="1.2"/><rect x="436" y="352.4" width="2.5" height="1.2"/><rect x="442.5" y="352.4" width="2.5" height="1.2"/><rect x="464" y="352.4" width="2.5" height="1.2"/>
</g>
<!-- UCS icon bottom-left -->
<g stroke="#2a5aa8" stroke-width=".8">
<path d="M86 331L101 362M86.5 350V361"/>
<path d="M88.5 352Q88 347 91 347Q94 347 94 352"/>
</g>
<path d="M87 366L91.5 361.5L96 366L100.5 361.5L104 366" stroke="#7a9ac8" stroke-width=".7"/>
<path d="M86 361.5H103" stroke="#5a7ab0" stroke-width=".6"/>
<rect x="83.4" y="364.3" width="3.9" height="4.2" fill="#1848f0"/>
<!-- crosshair -->
<path d="M140 78V81M140 361V373" stroke="#f2f2f2" stroke-width="1.2"/>
<path d="M140 81V361" stroke="#9a9a9a" stroke-width="1.4"/>
<path d="M1 278.5H86M482 278.5H566" stroke="#f4f4f4" stroke-width="1"/>
<path d="M86 278.5H482" stroke="#c8c8c8" stroke-width="1"/>
<circle cx="140" cy="278.5" r="14.1" stroke="#f4d418" stroke-width="1.5"/>
<ellipse cx="140" cy="278.5" rx="1.8" ry="1.3" fill="#bbb"/>
</g>
</svg>
<div class="a" style="left:566px;top:64px;width:162px;height:315px;background:#f0f0f0"></div>
<div class="a" style="left:566.3px;top:66.3px;width:2px;height:312.7px;background:#a6a6a6"></div>
<div class="a" style="left:572.8px;top:71.1px;width:131.9px;height:7.6px;background:#fff;border:1px solid #d0d0d0"></div>
<div class="a" style="left:697.8px;top:71.3px;width:6.9px;height:7.2px;background:#e8e8e8;border:1px solid #b0b8c4"></div>
<svg class="a" style="left:698.8px;top:73.6px" width="5" height="4"><path d="M1 1L2.5 2.6L4 1" stroke="#666" stroke-width=".6" fill="none"/></svg>
<div class="t" style="left:574px;top:73px;font-size:4.6px;color:#444">Block (1)</div>
<div class="a" style="left:573.1px;top:81.8px;width:10.5px;height:9.8px;background:#e6e6e6;border:1px solid #d8d8d8"></div>
<div class="a" style="left:586.2px;top:81.8px;width:10.5px;height:9.8px;background:#e6e6e6;border:1px solid #d8d8d8"></div>
<div class="a" style="left:599.5px;top:81.8px;width:10.5px;height:9.8px;background:#e6e6e6;border:1px solid #d8d8d8"></div>
<div class="a" style="left:613px;top:81.8px;width:10.5px;height:9.8px;background:#e6e6e6;border:1px solid #d8d8d8"></div>
<div class="a" style="left:626px;top:81.8px;width:10.5px;height:9.8px;background:#e6e6e6;border:1px solid #d8d8d8"></div>
<svg class="a" style="left:574px;top:82.5px" width="65" height="9" viewBox="0 0 65 9"><circle cx="4.3" cy="5" r="2.6" fill="none" stroke="#e0b040" stroke-width=".9"/><path d="M3 4L6 2" stroke="#4a8ad0" stroke-width=".7"/><circle cx="7.3" cy="2" r=".9" fill="#30a030"/><path d="M15.5 2.5L18 5.5L20 4.5L21.5 7M15.5 2.5L19 3.5" stroke="#555" stroke-width=".6" fill="none"/><path d="M14.5 3L16 5" stroke="#4a8ad0" stroke-width=".8"/><rect x="28" y="1.5" width="5" height="6" fill="none" stroke="#888" stroke-width=".5"/><path d="M30 4L32.5 7L33.5 6" stroke="#444" stroke-width=".6" fill="none"/><rect x="41.5" y="1.5" width="6" height="5.5" fill="#fff" stroke="#8ab" stroke-width=".5"/><path d="M42.5 3H46.5M42.5 4.5H45" stroke="#3a8ad0" stroke-width=".4"/><path d="M45.5 5.5Q47 5 47.5 7.5L46 8Z" fill="#f0b000"/><text x="55" y="7.5" font-size="7.5" font-family="Liberation Sans" font-weight="bold" fill="#444">?</text></svg>
<div class="a" style="left:573px;top:94px;width:131.5px;height:282px;background:#f4f4f4;border:1px solid #dcdcdc"></div>
<div class="a" style="left:698px;top:95px;width:6px;height:280px;background:#e8e8e8"></div>
<div class="a" style="left:698.5px;top:102px;width:5px;height:229px;background:#c8c8c8"></div>
<svg class="a" style="left:698px;top:96px" width="6" height="4"><path d="M1.2 3H4.8L3 1Z" fill="#222"/></svg>
<svg class="a" style="left:698px;top:370px" width="6" height="4"><path d="M1.2 1H4.8L3 3Z" fill="#222"/></svg>
<div class="a" style="left:577.2px;top:99.4px;width:116.2px;height:7.2px;background:#dfe4f8;border:1px solid #c8cce0"></div>
<div class="t" style="left:579px;top:100.80000000000001px;font-size:5.2px;font-weight:bold;color:#444;transform:scaleX(.9);transform-origin:0 0">General</div>
<svg class="a" style="left:687px;top:101.4px" width="4" height="3"><path d="M.3 2.6H3.7L2 .6Z" fill="#333"/></svg>
<div class="a" style="left:577.2px;top:186px;width:116.2px;height:7.2px;background:#dfe4f8;border:1px solid #c8cce0"></div>
<div class="t" style="left:579px;top:187.4px;font-size:5.2px;font-weight:bold;color:#444;transform:scaleX(.9);transform-origin:0 0">Geometry</div>
<svg class="a" style="left:687px;top:188px" width="4" height="3"><path d="M.3 2.6H3.7L2 .6Z" fill="#333"/></svg>
<div class="a" style="left:577.2px;top:254.2px;width:116.2px;height:7.2px;background:#dfe4f8;border:1px solid #c8cce0"></div>
<div class="t" style="left:579px;top:255.6px;font-size:5.2px;font-weight:bold;color:#444;transform:scaleX(.9);transform-origin:0 0">Misc</div>
<svg class="a" style="left:687px;top:256.2px" width="4" height="3"><path d="M.3 2.6H3.7L2 .6Z" fill="#333"/></svg>
<div class="a" style="left:577.2px;top:314.5px;width:116.2px;height:7.2px;background:#dfe4f8;border:1px solid #c8cce0"></div>
<div class="t" style="left:579px;top:315.9px;font-size:5.2px;font-weight:bold;color:#444;transform:scaleX(.9);transform-origin:0 0">BlockAttributes</div>
<svg class="a" style="left:687px;top:316.5px" width="4" height="3"><path d="M.3 2.6H3.7L2 .6Z" fill="#333"/></svg>
<div class="a" style="left:592.9px;top:112.3px;width:100.5px;height:7.5px;background:#fff;border:1px solid #d4d4d4"></div>
<div class="a" style="left:592.9px;top:121.22999999999999px;width:100.5px;height:7.5px;background:#fff;border:1px solid #d4d4d4"></div>
<div class="a" style="left:686.8px;top:121.82999999999998px;width:6px;height:6.3px;background:#e6e6e6;border:1px solid #bbb"></div>
<svg class="a" style="left:687.3px;top:123.42999999999999px" width="5" height="4"><path d="M1 .8L2.5 2.4L4 .8" stroke="#666" stroke-width=".6" fill="none"/></svg>
<div class="t" style="left:594.1px;top:123.02999999999999px;font-size:5px;color:#444;transform:scaleX(.88);transform-origin:0 0">Viewport</div>
<div class="a" style="left:592.9px;top:130.16px;width:100.5px;height:7.5px;background:#fff;border:1px solid #d4d4d4"></div>
<div class="a" style="left:686.8px;top:130.76px;width:6px;height:6.3px;background:#e6e6e6;border:1px solid #bbb"></div>
<svg class="a" style="left:687.3px;top:132.35999999999999px" width="5" height="4"><path d="M1 .8L2.5 2.4L4 .8" stroke="#666" stroke-width=".6" fill="none"/></svg>
<div class="t" style="left:601.5px;top:131.96px;font-size:5px;color:#444;transform:scaleX(.88);transform-origin:0 0">ByLayer</div>
<div class="a" style="left:592.9px;top:139.09px;width:100.5px;height:7.5px;background:#fff;border:1px solid #d4d4d4"></div>
<div class="t" style="left:594.1px;top:140.89000000000001px;font-size:5px;color:#444;transform:scaleX(.88);transform-origin:0 0">1</div>
<div class="a" style="left:592.9px;top:148.01999999999998px;width:100.5px;height:7.5px;background:#fff;border:1px solid #d4d4d4"></div>
<div class="a" style="left:686.8px;top:148.61999999999998px;width:6px;height:6.3px;background:#e6e6e6;border:1px solid #bbb"></div>
<svg class="a" style="left:687.3px;top:150.21999999999997px" width="5" height="4"><path d="M1 .8L2.5 2.4L4 .8" stroke="#666" stroke-width=".6" fill="none"/></svg>
<div class="t" style="left:594.1px;top:149.82px;font-size:5px;color:#444;transform:scaleX(.88);transform-origin:0 0">ByLayer&nbsp;&nbsp;&nbsp;&nbsp;Solid line</div>
<div class="a" style="left:592.9px;top:156.95px;width:100.5px;height:7.5px;background:#fff;border:1px solid #d4d4d4"></div>
<div class="a" style="left:686.8px;top:157.54999999999998px;width:6px;height:6.3px;background:#e6e6e6;border:1px solid #bbb"></div>
<svg class="a" style="left:687.3px;top:159.14999999999998px" width="5" height="4"><path d="M1 .8L2.5 2.4L4 .8" stroke="#666" stroke-width=".6" fill="none"/></svg>
<div class="t" style="left:594.1px;top:158.75px;font-size:5px;color:#444;transform:scaleX(.88);transform-origin:0 0">&#8212;&#8212;&#8212; ByLayer</div>
<div class="a" style="left:592.9px;top:165.88px;width:100.5px;height:7.5px;background:#fff;border:1px solid #d4d4d4"></div>
<div class="t" style="left:594.1px;top:167.68px;font-size:5px;color:#444;transform:scaleX(.88);transform-origin:0 0">ByLayer</div>
<div class="a" style="left:592.9px;top:174.81px;width:100.5px;height:7.5px;background:#e8e8e8;border:1px solid #d4d4d4"></div>
<div class="a" style="left:686.8px;top:175.41px;width:6px;height:6.3px;background:#e6e6e6;border:1px solid #bbb"></div>
<svg class="a" style="left:687.3px;top:177.01px" width="5" height="4"><path d="M1 .8L2.5 2.4L4 .8" stroke="#666" stroke-width=".6" fill="none"/></svg>
<div class="t" style="left:594.1px;top:176.61px;font-size:5px;color:#aaa;transform:scaleX(.88);transform-origin:0 0">ByColor</div>
<svg class="a" style="left:594.5px;top:131.46px" width="5" height="5"><circle cx="2.5" cy="2.5" r="1.8" fill="#ffe000" stroke="#b89000" stroke-width=".4"/></svg>
<div class="a" style="left:592.9px;top:198.8px;width:100.5px;height:7.5px;background:#fff;border:1px solid #d4d4d4"></div>
<div class="t" style="left:594.1px;top:200.60000000000002px;font-size:5px;color:#444;transform:scaleX(.88);transform-origin:0 0">0</div>
<div class="a" style="left:592.9px;top:207.8px;width:100.5px;height:7.5px;background:#fff;border:1px solid #d4d4d4"></div>
<div class="t" style="left:594.1px;top:209.60000000000002px;font-size:5px;color:#444;transform:scaleX(.88);transform-origin:0 0">0</div>
<div class="a" style="left:592.9px;top:216.8px;width:100.5px;height:7.5px;background:#fff;border:1px solid #d4d4d4"></div>
<div class="t" style="left:594.1px;top:218.60000000000002px;font-size:5px;color:#444;transform:scaleX(.88);transform-origin:0 0">0</div>
<div class="a" style="left:592.9px;top:225.8px;width:100.5px;height:7.5px;background:#fff;border:1px solid #d4d4d4"></div>
<div class="t" style="left:594.1px;top:227.60000000000002px;font-size:5px;color:#444;transform:scaleX(.88);transform-origin:0 0">1</div>
<div class="a" style="left:592.9px;top:234.8px;width:100.5px;height:7.5px;background:#fff;border:1px solid #d4d4d4"></div>
<div class="t" style="left:594.1px;top:236.60000000000002px;font-size:5px;color:#444;transform:scaleX(.88);transform-origin:0 0">1</div>
<div class="a" style="left:592.9px;top:243.8px;width:100.5px;height:7.5px;background:#fff;border:1px solid #d4d4d4"></div>
<div class="t" style="left:594.1px;top:245.60000000000002px;font-size:5px;color:#444;transform:scaleX(.88);transform-origin:0 0">1</div>
<div class="a" style="left:592.9px;top:267.5px;width:100.5px;height:7.5px;background:#fff;border:1px solid #d4d4d4"></div>
<div class="t" style="left:594.1px;top:269.3px;font-size:5px;color:#444;transform:scaleX(.88);transform-origin:0 0">0</div>
<div class="a" style="left:592.9px;top:276.6px;width:100.5px;height:7.5px;background:#e8e8e8;border:1px solid #d4d4d4"></div>
<div class="a" style="left:686.8px;top:277.20000000000005px;width:6px;height:6.3px;background:#e6e6e6;border:1px solid #bbb"></div>
<svg class="a" style="left:687.3px;top:278.8px" width="5" height="4"><path d="M1 .8L2.5 2.4L4 .8" stroke="#666" stroke-width=".6" fill="none"/></svg>
<div class="t" style="left:594.1px;top:278.40000000000003px;font-size:5px;color:#999;transform:scaleX(.88);transform-origin:0 0">No</div>
<div class="a" style="left:592.9px;top:285.5px;width:100.5px;height:7.5px;background:#b4ccec;border:1px solid #d4d4d4"></div>
<div class="t" style="left:594.1px;top:287.3px;font-size:5px;color:#444;transform:scaleX(.88);transform-origin:0 0">1</div>
<div class="a" style="left:592.9px;top:294.3px;width:100.5px;height:7.5px;background:#b4ccec;border:1px solid #d4d4d4"></div>
<div class="t" style="left:594.1px;top:296.1px;font-size:5px;color:#444;transform:scaleX(.88);transform-origin:0 0">Millimeters</div>
<div class="a" style="left:592.9px;top:303.2px;width:100.5px;height:7.5px;background:#b4ccec;border:1px solid #d4d4d4"></div>
<div class="t" style="left:594.1px;top:305.0px;font-size:5px;color:#444;transform:scaleX(.88);transform-origin:0 0">A3H Title</div>
<svg class="a" style="left:581px;top:112.3px" width="8" height="8" viewBox="0 0 8 8"><path d="M1.5 5L5 1.5H7V3.5L3.5 7Z" fill="#9cc4e8"/></svg>
<svg class="a" style="left:581px;top:121.22999999999999px" width="8" height="8" viewBox="0 0 8 8"><path d="M1.5 2L4 1L7 2.5L6 6.5L2 6.5Z" fill="#d8a030" stroke="#7a5a10" stroke-width=".4"/></svg>
<svg class="a" style="left:581px;top:130.16px" width="8" height="8" viewBox="0 0 8 8"><path d="M1.5 4L4 1.5L6.5 4L4 6.5Z" fill="#666"/><circle cx="6" cy="6" r="1.2" fill="#3a6ac0"/></svg>
<svg class="a" style="left:581px;top:139.09px" width="8" height="8" viewBox="0 0 8 8"><rect x="1" y="1.5" width="6" height="5" fill="none" stroke="#aaa" stroke-width=".5"/><path d="M4 1.5V6.5" stroke="#aaa" stroke-width=".4"/></svg>
<svg class="a" style="left:581px;top:148.01999999999998px" width="8" height="8" viewBox="0 0 8 8"><rect x="1" y="1.5" width="6" height="5" fill="none" stroke="#bbb" stroke-width=".5"/><path d="M1 3.5H7M1 5H7" stroke="#bbb" stroke-width=".4" stroke-dasharray=".8 .5"/></svg>
<svg class="a" style="left:581px;top:156.95px" width="8" height="8" viewBox="0 0 8 8"><path d="M1 2H7" stroke="#444" stroke-width=".9"/><path d="M1 4.2H7" stroke="#444" stroke-width="1.1"/><path d="M1 6.4H7" stroke="#555" stroke-width="1.2"/></svg>
<svg class="a" style="left:581px;top:165.88px" width="8" height="8" viewBox="0 0 8 8"><path d="M1.5 1.5L6.5 6.5M6.5 1.5L1.5 6.5" stroke="#777" stroke-width=".6"/><circle cx="4" cy="4" r="1" fill="#888"/></svg>
<svg class="a" style="left:581px;top:174.81px" width="8" height="8" viewBox="0 0 8 8"><rect x="1" y="1" width="6" height="6" fill="#d8c090"/><path d="M4 1V7" stroke="#6a8ac0" stroke-width="1.2"/></svg>
<svg class="a" style="left:581px;top:198.5px" width="8" height="8" viewBox="0 0 8 8"><path d="M1 6L4 3" stroke="#4a7ac0" stroke-width=".7"/><circle cx="4.5" cy="2.5" r="1.3" fill="none" stroke="#6a8ab0" stroke-width=".5"/><path d="M1.5 2L3 4" stroke="#888" stroke-width=".5"/><rect x="6" y="6" width="1.2" height="1.2" fill="#333"/></svg>
<svg class="a" style="left:581px;top:207.5px" width="8" height="8" viewBox="0 0 8 8"><path d="M1 6L4 3" stroke="#4a7ac0" stroke-width=".7"/><circle cx="4.5" cy="2.5" r="1.3" fill="none" stroke="#6a8ab0" stroke-width=".5"/><path d="M1.5 2L3 4" stroke="#888" stroke-width=".5"/><rect x="6" y="6" width="1.2" height="1.2" fill="#333"/></svg>
<svg class="a" style="left:581px;top:216.5px" width="8" height="8" viewBox="0 0 8 8"><path d="M1 6L4 3" stroke="#4a7ac0" stroke-width=".7"/><circle cx="4.5" cy="2.5" r="1.3" fill="none" stroke="#6a8ab0" stroke-width=".5"/><path d="M1.5 2L3 4" stroke="#888" stroke-width=".5"/><rect x="6" y="6" width="1.2" height="1.2" fill="#333"/></svg>
<svg class="a" style="left:581px;top:225.5px" width="8" height="8" viewBox="0 0 8 8"><circle cx="4.5" cy="2.5" r="1.8" fill="none" stroke="#4a7ac0" stroke-width=".6"/><path d="M2 5Q1 7 3 7.5Q5 7 4 5.5" fill="none" stroke="#666" stroke-width=".5"/><path d="M6 5L6.5 7.5" stroke="#4a7ac0" stroke-width=".5"/></svg>
<svg class="a" style="left:581px;top:234.5px" width="8" height="8" viewBox="0 0 8 8"><circle cx="4.5" cy="2.5" r="1.8" fill="none" stroke="#4a7ac0" stroke-width=".6"/><path d="M2 5Q1 7 3 7.5Q5 7 4 5.5" fill="none" stroke="#666" stroke-width=".5"/><path d="M6 5L6.5 7.5" stroke="#4a7ac0" stroke-width=".5"/></svg>
<svg class="a" style="left:581px;top:243.5px" width="8" height="8" viewBox="0 0 8 8"><circle cx="4.5" cy="2.5" r="1.8" fill="none" stroke="#4a7ac0" stroke-width=".6"/><path d="M2 5Q1 7 3 7.5Q5 7 4 5.5" fill="none" stroke="#666" stroke-width=".5"/><path d="M6 5L6.5 7.5" stroke="#4a7ac0" stroke-width=".5"/></svg>
<svg class="a" style="left:581px;top:267.5px" width="8" height="8" viewBox="0 0 8 8"><path d="M2 6.5A3 3 0 0 1 6 2" fill="none" stroke="#aaa" stroke-width=".6" stroke-dasharray="1 .5"/></svg>
<svg class="a" style="left:581px;top:276.6px" width="8" height="8" viewBox="0 0 8 8"><text x="1" y="7.3" font-size="7.5" font-family="Liberation Sans" fill="#333">A</text></svg>
<svg class="a" style="left:581px;top:285.5px" width="8" height="8" viewBox="0 0 8 8"><text x=".5" y="6.5" font-size="5" font-family="Liberation Sans" fill="#333">xՈ</text></svg>
<svg class="a" style="left:581px;top:294.3px" width="8" height="8" viewBox="0 0 8 8"><path d="M1 2.5H3M4 2.5H7M1 5H7M1 6.5H3M5 6.5H7" stroke="#777" stroke-width=".5"/></svg>
<svg class="a" style="left:581px;top:303.2px" width="8" height="8" viewBox="0 0 8 8"><rect x="1" y="2" width="6.5" height="4" rx="1" fill="none" stroke="#777" stroke-width=".5"/></svg>
<div class="a" style="left:610px;top:327.5px;width:83.39999999999998px;height:7.5px;background:#fff;border:1px solid #d4d4d4"></div>
<div class="t" style="left:611.2px;top:329.3px;font-size:5px;color:#444;transform:scaleX(.88);transform-origin:0 0">XXXX</div>
<div class="t" style="left:580.5px;top:329.2px;font-size:4.8px;color:#555;transform:scaleX(.8);transform-origin:0 0">ENTERPILEREF</div>
<div class="a" style="left:610px;top:336.7px;width:83.39999999999998px;height:7.5px;background:#fff;border:1px solid #d4d4d4"></div>
<div class="t" style="left:611.2px;top:338.5px;font-size:5px;color:#444;transform:scaleX(.88);transform-origin:0 0">Project Title 1</div>
<div class="t" style="left:580.5px;top:338.4px;font-size:4.8px;color:#555;transform:scaleX(.8);transform-origin:0 0">XXXX</div>
<div class="a" style="left:610px;top:345.8px;width:83.39999999999998px;height:7.5px;background:#fff;border:1px solid #d4d4d4"></div>
<div class="t" style="left:611.2px;top:347.6px;font-size:5px;color:#444;transform:scaleX(.88);transform-origin:0 0">Project Title 2</div>
<div class="t" style="left:580.5px;top:347.5px;font-size:4.8px;color:#555;transform:scaleX(.8);transform-origin:0 0">XXXX</div>
<div class="a" style="left:610px;top:354.7px;width:83.39999999999998px;height:7.5px;background:#fff;border:1px solid #d4d4d4"></div>
<div class="t" style="left:611.2px;top:356.5px;font-size:5px;color:#444;transform:scaleX(.88);transform-origin:0 0">Project No.</div>
<div class="t" style="left:580.5px;top:356.4px;font-size:4.8px;color:#555;transform:scaleX(.8);transform-origin:0 0">XXXX</div>
<div class="a" style="left:610px;top:363.8px;width:83.39999999999998px;height:7.5px;background:#fff;border:1px solid #d4d4d4"></div>
<div class="t" style="left:611.2px;top:365.6px;font-size:5px;color:#444;transform:scaleX(.88);transform-origin:0 0">Drawn By</div>
<div class="t" style="left:580.5px;top:365.5px;font-size:4.8px;color:#555;transform:scaleX(.8);transform-origin:0 0">XXXX</div>
<div class="a" style="left:610px;top:372.8px;width:83.4px;height:3px;background:#fff;border:1px solid #d4d4d4;border-bottom:none"></div>
<div class="a" style="left:573px;top:374.5px;width:131.5px;height:4.5px;background:#f0f0f0"></div>
<div class="a" style="left:709px;top:66px;width:9.6px;height:313px;background:#bdbdbd;border-left:1px solid #a8a8a8"></div>
<svg class="a" style="left:709.5px;top:67px" width="9" height="18" viewBox="0 0 9 18"><path d="M3 3L6 6M6 3L3 6" stroke="#444" stroke-width=".7"/><path d="M3 10.5H6.5M4.8 10.5V14.5M3.5 12.5H6" stroke="#222" stroke-width="1"/></svg>
<div class="t" style="left:711px;top:368px;font-size:4.8px;color:#444;transform:rotate(-90deg);transform-origin:0 0">Properties</div>
<svg class="a" style="left:710.5px;top:370px" width="7" height="7"><rect x="1" y="1" width="1.5" height="1.5" fill="#e0b000"/><rect x="3" y="1" width="1.5" height="1.5" fill="#c03020"/><rect x="1" y="3.5" width="1.5" height="2" fill="#3070c0"/><rect x="3.5" y="3.5" width="1.5" height="2" fill="#30a030"/></svg>
<div class="a" style="left:719px;top:66px;width:9px;height:313px;background:#f0f0f0"></div>
<div class="a" style="left:719px;top:67px;width:9px;height:27.7px;background:#f6f6f6;border-bottom:1px solid #ddd"></div>
<div class="a" style="left:719px;top:95px;width:9px;height:44px;background:#f6f6f6;border-bottom:1px solid #ddd"></div>
<div class="a" style="left:719px;top:139px;width:9px;height:32px;background:#fff"></div>
<div class="t" style="left:721.2px;top:92.6px;font-size:4.3px;color:#555;transform:rotate(-90deg);transform-origin:0 0">Hamelin Ma</div>
<div class="t" style="left:721.2px;top:135px;font-size:4.3px;color:#555;transform:rotate(-90deg);transform-origin:0 0">G-code Generator</div>
<div class="t" style="left:721.2px;top:167px;font-size:4.3px;color:#555;transform:rotate(-90deg);transform-origin:0 0">Properties</div>
<!-- sheet tabs -->
<div class="a" style="left:0;top:373px;width:566px;height:7.5px;background:#f0f0f0;border-bottom:1px solid #f8f8f8"></div>
<svg class="a" style="left:0;top:372px" width="100" height="9" viewBox="0 0 100 9">
<path d="M22 1.5L24.5 8.5H49.5L52 1.5Z" fill="#fff"/>
<path d="M1.5 1.5L3.5 8.5M21.5 8.5L23.5 1.5L25.5 8.5M49 8.5L51 1.5L53 8.5M72.5 8.5L74.5 1.5" stroke="#666" stroke-width=".6" fill="none"/>
</svg>
<div class="t s6" style="left:6.2px;top:374.3px;color:#555">Model</div>
<div class="t s6" style="left:29.5px;top:374.3px;color:#333;font-weight:bold">Sheet1</div>
<div class="t s6" style="left:56.3px;top:374.3px;color:#555">Sheet2</div>
<div class="a" style="left:79.4px;top:374.5px;width:8px;height:5px;background:#e8e8e8;border:1px solid #c4c4c4"></div>
<svg class="a" style="left:80.4px;top:375.5px" width="6" height="3"><path d="M1.5 1.5H4.5M3 .5V2.5" stroke="#777" stroke-width=".5"/></svg>
<!-- command window -->
<div class="a" style="left:0;top:380.5px;width:728px;height:10.2px;background:#c4c6c4;border-top:1px solid #9a9c9a;border-bottom:1px solid #aaacaa"></div>
<div class="t" style="left:2.9px;top:382.6px;font-size:5.6px;font-weight:bold;color:#333;transform:scaleX(.83);transform-origin:0 0">Command window</div>
<svg class="a" style="left:709px;top:382px" width="19" height="8" viewBox="0 0 19 8">
<rect x="2.5" y="3" width="3" height="3" fill="none" stroke="#444" stroke-width=".6"/><rect x="3.7" y="1.8" width="3" height="3" fill="none" stroke="#444" stroke-width=".6"/>
<path d="M11.8 2.2L15 5.5M15 2.2L11.8 5.5" stroke="#444" stroke-width=".7"/>
</svg>
<div class="a" style="left:0;top:390.5px;width:728px;height:28.5px;background:#fff"></div>
<div class="a" style="left:1px;top:390.5px;width:1px;height:21.5px;background:#d4d4d4"></div>
<div class="a" style="left:720px;top:390.5px;width:8px;height:21.5px;background:#f0f0f0"></div>
<svg class="a" style="left:720px;top:390.5px" width="8" height="22" viewBox="0 0 8 22">
<path d="M2.3 5.5H5.7L4 3.5Z" fill="#333"/><rect x="1" y="11.5" width="6" height="3.5" fill="#cdcdcd"/><path d="M2.3 17.5H5.7L4 19.5Z" fill="#333"/>
</svg>
<div class="t" style="left:3.3px;top:392.2px;font-size:5.8px;color:#606060;transform:scaleX(.9);transform-origin:0 0">Automatic save to C:\Users\MJ\AppData\Local\Temp\DraftSight_autosave\House_12996_1.ds$</div>
<div class="t" style="left:3.3px;top:398.5px;font-size:5.8px;color:#606060;transform:scaleX(.9);transform-origin:0 0">Command: LAYER</div>
<div class="t" style="left:3.3px;top:405.2px;font-size:5.8px;color:#606060;transform:scaleX(.9);transform-origin:0 0">Command: &nbsp;_MAINSELECTSpecify opposite corner:</div>
<div class="a" style="left:0;top:411.8px;width:728px;height:1px;background:#d8d8d8"></div>
<div class="t" style="left:3.3px;top:413.6px;font-size:5.8px;color:#606060;transform:scaleX(.9);transform-origin:0 0">Command:</div>
<!-- status -->
<div class="a" style="left:0;top:419px;width:728px;height:15px;background:#efefef"></div>
<div class="t" style="left:2px;top:423.6px;font-size:4.8px;color:#444">DraftSight 2019 x64</div>
<!-- status bar icons -->
<div class="a" style="left:255.3px;top:421.3px;width:9.5px;height:9.5px;background:#e2e2e2"></div>
<svg class="a" style="left:256px;top:422px" width="9" height="9" viewBox="0 0 9 9"><ellipse cx="3.5" cy="2.5" rx="2.5" ry="1.2" fill="#555"/><ellipse cx="3.5" cy="4.5" rx="2.5" ry="1.2" fill="#333"/><ellipse cx="3.5" cy="6.3" rx="2.5" ry="1.2" fill="#666"/><rect x="4.5" y="4.8" width="3.5" height="3.5" fill="#f0b000"/><circle cx="7.3" cy="7.4" r=".9" fill="#d02020"/></svg>
<div class="a" style="left:268px;top:420px;width:39px;height:12.4px;background:#ececec;border:1px solid #dcdcdc"></div>
<div class="a" style="left:270.1px;top:421.5px;width:9.2px;height:9.3px;background:#dcdcdc"></div>
<div class="a" style="left:282.1px;top:421.5px;width:10.7px;height:9.3px;background:#dcdcdc"></div>
<div class="a" style="left:296.1px;top:421.5px;width:9.9px;height:9.3px;background:#dcdcdc"></div>
<svg class="a" style="left:270px;top:421.5px" width="37" height="9.5" viewBox="0 0 37 9.5">
<path d="M2 2L7 7.5" stroke="#555" stroke-width=".8"/><circle cx="3" cy="3" r="1" fill="#c08030"/><rect x="5.5" y="5.5" width="2" height="2" fill="#eee"/>
<path d="M14.5 2.5V7.5M17.5 2.5V7.5M13 4H19M13 6H19" stroke="#555" stroke-width=".9"/>
<path d="M28 3.5L30 2.5L33.5 3.5V7L30 8L28 7ZM27 5H28.5M31.5 5.5H35" stroke="#777" stroke-width=".6" fill="none"/>
</svg>
<div class="a" style="left:309.5px;top:420px;width:102.5px;height:12.4px;background:#ececec;border:1px solid #dcdcdc"></div>
<div class="a" style="left:311px;top:421.5px;width:9.8px;height:9.5px;background:#e0e0e0"></div>
<svg class="a" style="left:311px;top:421.5px" width="10" height="9.5" viewBox="0 0 10 9.5"><circle cx="4.5" cy="5" r="2.8" fill="none" stroke="#555" stroke-width=".8"/><path d="M7.5 5H9.5M6.5 2L8 1M6.5 8L8 9" stroke="#6aa8e0" stroke-width=".5"/></svg>
<div class="a" style="left:324.1px;top:421.3px;width:9.5px;height:9.7px;background:#cde2f6;border:1px solid #94bde6"></div>
<div class="a" style="left:337.2px;top:421.3px;width:9.8px;height:9.7px;background:#cde2f6;border:1px solid #94bde6"></div>
<div class="a" style="left:351px;top:421.3px;width:9.8px;height:9.7px;background:#cde2f6;border:1px solid #94bde6"></div>
<div class="a" style="left:364.1px;top:421.3px;width:9.5px;height:9.7px;background:#cde2f6;border:1px solid #94bde6"></div>
<svg class="a" style="left:324px;top:421.3px" width="50" height="10" viewBox="0 0 50 10">
<path d="M4 2L6.5 5.5L8.5 8" stroke="#555" stroke-width=".8"/><path d="M2.5 1.5V7M2.5 7.5H6" stroke="#7ab0e0" stroke-width=".5"/><circle cx="8.5" cy="8" r=".9" fill="#d02020"/>
<path d="M16 4H19M16 2V5M20 3V8H23V3" stroke="#5a8ac0" stroke-width=".6" fill="none"/><path d="M20.5 4H22.5" stroke="#888" stroke-width=".8"/>
<rect x="29.5" y="2" width="6" height="6" fill="none" stroke="#8a9ab0" stroke-width=".6"/><path d="M30 2.5L35.5 8" stroke="#555" stroke-width=".6"/>
<path d="M44 3V8H48V3Z" fill="none" stroke="#666" stroke-width=".6"/><path d="M42 6.5H44M45 2.5L46 1.5" stroke="#2a6ae0" stroke-width=".7"/><circle cx="42" cy="6.5" r=".6" fill="#2a5ad0"/>
</svg>
<div class="a" style="left:376.9px;top:422.1px;width:33.8px;height:7.4px;background:#d4e8f8;border:1px solid #7aaad8"></div>
<div class="t" style="left:379.5px;top:423.6px;font-size:5.2px;color:#666;transform:scaleX(.9);transform-origin:0 0">Dynamic CCS</div>
<div class="a" style="left:414.1px;top:420px;width:52.2px;height:12.4px;background:#ececec;border:1px solid #dcdcdc"></div>
<div class="a" style="left:415.5px;top:422.1px;width:38.5px;height:8.5px;background:#e2e2e2;border:1px solid #d0d0d0"></div>
<div class="t" style="left:417px;top:424px;font-size:5.2px;color:#555;transform:scaleX(.9);transform-origin:0 0">Annotation</div>
<svg class="a" style="left:446px;top:424px" width="6" height="5"><path d="M.5 1H5L2.75 3.8Z" fill="#222"/></svg>
<div class="t" style="left:456.7px;top:423.4px;font-size:5px;color:#b8a070">(1:1)</div>
<div class="t" style="left:469px;top:423.6px;font-size:5px;color:#444;transform:scaleX(.92);transform-origin:0 0">(58.335,92.514,0)</div>
<svg class="a" style="left:720px;top:427px" width="8" height="7"><path d="M7 1L1 7M7 3.5L3.5 7M7 6L6 7" stroke="#bbb" stroke-width=".5"/></svg>
</body></html>
